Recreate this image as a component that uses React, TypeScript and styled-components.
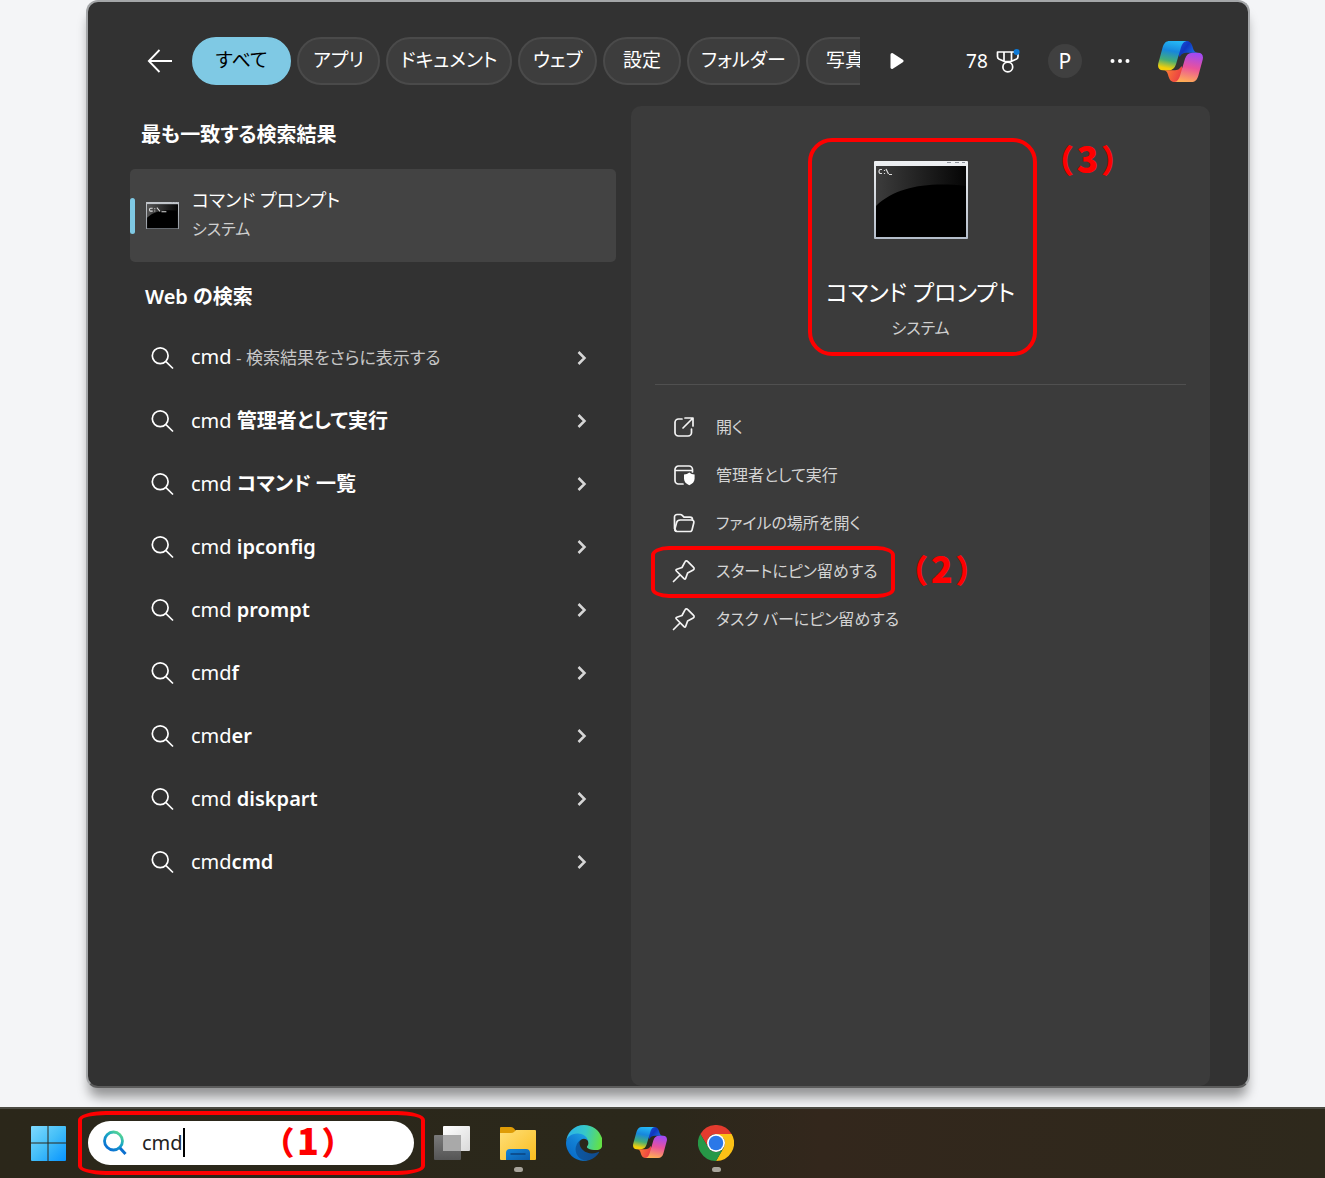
import React, { useId, useState } from "react";
import styled, { createGlobalStyle } from "styled-components";

const GlobalStyle = createGlobalStyle`
  *, *::before, *::after { box-sizing: border-box; }
  body {
    margin: 0;
    background: #f4f5f7;
    font-family: "Noto Sans", "Noto Sans CJK JP", sans-serif;
    font-feature-settings: "palt";
  }
  button, input { font: inherit; font-feature-settings: inherit; color: inherit; }
  button { background: none; border: 0; padding: 0; cursor: pointer; text-align: left; }
  svg { display: block; flex: none; }
  h1, h2, p, ul { margin: 0; padding: 0; }
  ul { list-style: none; }
`;

const Desktop = styled.div`
  min-height: 100vh;
  display: flex;
  flex-direction: column;
`;

const Stage = styled.div`
  flex: 1;
  display: flex;
  padding: 0 75px 19px 86px;
`;

const SearchWindow = styled.main`
  flex: 1;
  min-width: 0;
  display: flex;
  flex-direction: column;
  border: 2px solid #a4a6a8;
  border-bottom-color: #5c5c5c;
  border-radius: 12px;
  background: #323232;
  color: #fff;
  box-shadow: 0 12px 12px -3px rgba(0, 0, 0, 0.4);
`;

const Header = styled.header`
  display: flex;
  align-items: center;
  height: 104px;
  padding: 14px 45px 0 59px;
`;

const BackButton = styled.button`
  width: 45px;
`;

const Pills = styled.nav`
  display: flex;
  gap: 6px;
  width: 668px;
  overflow: hidden;
`;

const Pill = styled.button<{ $active?: boolean; $width: number }>`
  flex: none;
  width: ${(p) => p.$width}px;
  height: 48px;
  padding: 0 0 2px;
  border: 2px solid ${(p) => (p.$active ? "#7fc9e4" : "#4a4a4a")};
  border-radius: 24px;
  background: ${(p) => (p.$active ? "#7fc9e4" : "#3d3d3d")};
  color: ${(p) => (p.$active ? "#000" : "#fff")};
  font-size: 19px;
  line-height: 28px;
  text-align: center;
`;

const HeaderTools = styled.div`
  flex: 1;
  display: flex;
  align-items: center;
  justify-content: space-between;
  padding-left: 30px;
`;

const Points = styled.button`
  display: flex;
  align-items: center;
  gap: 8px;
  margin-left: 34px;
  font-size: 19px;
  line-height: 28px;
`;

const Avatar = styled.button`
  width: 34px;
  height: 34px;
  border-radius: 50%;
  background: #404040;
  font-size: 21px;
  line-height: 32px;
  text-align: center;
`;

const Columns = styled.div`
  flex: 1;
  display: grid;
  grid-template-columns: minmax(0, 486fr) minmax(0, 579fr);
  gap: 15px;
  padding: 0 38px 0 42px;
`;

const Results = styled.section`
  min-width: 0;
`;

const Heading = styled.h2<{ $inset: number }>`
  padding: 14px 0 0 ${(p) => p.$inset}px;
  font-size: 20px;
  font-weight: 600;
  line-height: 30px;
`;

const BestMatch = styled.button`
  display: flex;
  align-items: center;
  width: 100%;
  height: 93px;
  margin: 19px 0 6px;
  border-radius: 5px;
  background: #434343;
  gap: 13px;
`;

const Accent = styled.span`
  width: 5px;
  height: 36px;
  margin-right: -2px;
  border-radius: 3px;
  background: #7fc9e4;
`;

const BestText = styled.span`
  display: flex;
  flex-direction: column;
  padding-bottom: 4px;
`;

const Title = styled.span`
  font-size: 18px;
  line-height: 30px;
`;

const Subtitle = styled.span`
  color: #cfcfcf;
  font-size: 16px;
  line-height: 28px;
`;

const Suggestions = styled.ul`
  padding-top: 14px;
`;

const Suggestion = styled.button`
  display: flex;
  align-items: center;
  width: 100%;
  height: 63px;
  padding: 0 27px 0 21px;
  gap: 17px;
  font-size: 20px;
  line-height: 30px;
`;

const Query = styled.span`
  flex: 1;
  white-space: pre;
  b { font-weight: 600; }
  small { font-size: 17px; color: #c6c6c6; }
`;

const Detail = styled.section`
  min-width: 0;
  padding: 0 24px;
  border-radius: 10px;
  background: #3b3b3b;
`;

const Hero = styled.div`
  display: flex;
  flex-direction: column;
  align-items: center;
  height: 279px;
  padding-top: 32px;
  border-bottom: 1px solid #505050;
`;

const HeroCard = styled.div`
  position: relative;
  display: flex;
  flex-direction: column;
  align-items: center;
  width: 228px;
  height: 218px;
  padding-top: 23px;
`;

const HeroTitle = styled.h1`
  margin-top: 33px;
  font-size: 23px;
  font-weight: 400;
  line-height: 40px;
  white-space: nowrap;
`;

const HeroSub = styled.p`
  margin-top: 2px;
  color: #cfcfcf;
  font-size: 16px;
  line-height: 28px;
`;

const Actions = styled.ul`
  padding-top: 18px;
`;

const ActionItem = styled.li`
  display: flex;
`;

const Action = styled.button`
  position: relative;
  display: flex;
  align-items: center;
  height: 48px;
  padding: 0 17px;
  gap: 20px;
  color: #d4d4d4;
  font-size: 16px;
  line-height: 28px;
`;

/* Red call-outs laid over the controls they explain. */
const Ring = styled.span<{ $radius: string; $inset: string }>`
  position: absolute;
  inset: ${(p) => p.$inset};
  border: 4px solid #fe0000;
  border-radius: ${(p) => p.$radius};
  pointer-events: none;
`;

const StepLabel = styled.span<{ $left: string; $top: string }>`
  position: absolute;
  left: ${(p) => p.$left};
  top: ${(p) => p.$top};
  color: #fe0000;
  font-family: "Noto Sans CJK JP", sans-serif;
  font-size: 32px;
  font-weight: 900;
  line-height: 44px;
  white-space: nowrap;
  pointer-events: none;
  b {
    margin: 0 4px;
    font-size: 36px;
  }
`;

const Step = ({ n, left, top }: { n: number; left: string; top: string }) => (
  <StepLabel $left={left} $top={top}>
    （<b>{n}</b>）
  </StepLabel>
);

const Taskbar = styled.footer`
  display: flex;
  align-items: center;
  height: 71px;
  padding: 0 0 2px 30px;
  border-top: 2px solid #4c4b43;
  background: linear-gradient(90deg, #2b271a, #2b281b 50%, #33271c 62%, #2e291c);
`;

const SearchWrap = styled.div`
  position: relative;
  margin: 0 5px 0 22px;
`;

const SearchBox = styled.label`
  display: flex;
  align-items: center;
  width: 326px;
  height: 44px;
  padding-left: 15px;
  border-radius: 22px;
  background: #fff;
  color: #222;
`;

const SearchInput = styled.input`
  field-sizing: content;
  min-width: 8px;
  max-width: 240px;
  margin-left: 15px;
  padding: 0;
  border: 0;
  outline: 0;
  background: transparent;
  font-size: 20px;
  line-height: 30px;
  caret-color: transparent;
`;

const Caret = styled.span`
  width: 2px;
  height: 29px;
  background: #000;
`;

const TaskButton = styled.button<{ $running?: boolean }>`
  position: relative;
  display: flex;
  align-items: center;
  justify-content: center;
  width: 66px;
  height: 67px;
  &::after {
    content: "";
    display: ${(p) => (p.$running ? "block" : "none")};
    position: absolute;
    bottom: 4px;
    left: 29px;
    width: 9px;
    height: 5px;
    border-radius: 3px;
    background: #a8a49b;
  }
`;

const CopilotIcon = ({ width }: { width: number }) => {
  const id = useId();
  const ref = (n: string) => `url(#${id}${n})`;
  return (
    <svg width={width} viewBox="0 0 135 123" aria-hidden="true">
      <defs>
        <linearGradient id={id + "a"} x1="0.6" y1="0" x2="0.4" y2="1">
          <stop offset="0" stopColor="#25b8f5" />
          <stop offset="0.35" stopColor="#1787dc" />
          <stop offset="0.68" stopColor="#45ad77" />
          <stop offset="0.95" stopColor="#f4cf0a" />
        </linearGradient>
        <linearGradient id={id + "b"} x1="0.6" y1="0" x2="0.4" y2="1">
          <stop offset="0" stopColor="#a04af5" />
          <stop offset="0.5" stopColor="#ea529b" />
          <stop offset="1" stopColor="#ffad55" />
        </linearGradient>
        <linearGradient id={id + "c"} x1="0" y1="0" x2="1" y2="0.6">
          <stop offset="0" stopColor="#1d57df" />
          <stop offset="0.5" stopColor="#0f37bf" />
          <stop offset="1" stopColor="#1c72e6" />
        </linearGradient>
        <linearGradient id={id + "d"} x1="0" y1="0" x2="1" y2="0.3">
          <stop offset="0" stopColor="#ff8a32" />
          <stop offset="1" stopColor="#e93a45" />
        </linearGradient>
      </defs>
      <path fill={ref("c")} d="M68 0H84C95 0 100 6 103 15L106 25C108 31 112 35 120 35H88C76 35 70 38 65 48L56 30Z" />
      <path fill={ref("d")} d="M67 123H51C40 123 35 117 32 108L29 98C27 92 23 88 15 88H47C59 88 65 85 70 75L79 93Z" />
      <path fill={ref("a")} d="M35 0H86C77 1 72 9 69 19L54 70C50 82 43 88 32 88H15C2 88-3 78 2 63L14 19C18 6 24 0 35 0Z" />
      <path fill={ref("b")} d="M100 123H49C58 122 63 114 66 104L81 53C85 41 92 35 103 35H120C133 35 138 45 133 60L121 104C117 117 111 123 100 123Z" />
    </svg>
  );
};

const TerminalIcon = ({ width, small }: { width: number; small?: boolean }) => {
  const id = useId();
  const edge = small ? 3 : 2;
  const top = small ? 7 : 5;
  return (
    <svg width={width} viewBox="0 0 94 78" aria-hidden="true">
      <defs>
        <linearGradient id={id + "g"} x1="0" y1="0" x2="1" y2="0">
          <stop offset="0" stopColor={small ? "#555" : "#3c3c3c"} />
          <stop offset="1" stopColor="#050505" />
        </linearGradient>
        <linearGradient id={id + "f"} x1="0" y1="0" x2="0" y2="1">
          <stop offset="0" stopColor={small ? "#c3c7cc" : "#eef0f2"} />
          <stop offset="1" stopColor={small ? "#9399a1" : "#b4bdca"} />
        </linearGradient>
      </defs>
      <rect width="94" height="78" rx="1" fill={`url(#${id}f)`} />
      <path d="M73 1.5h4m4 0h4m3 0h3" stroke="#8b9099" />
      <rect x={edge} y={top} width={94 - 2 * edge} height={small ? 68 : 71} fill="#000" />
      <path d={`M${edge} ${top}H${94 - edge}V25C55 21 23 25 ${edge} 45Z`} fill={`url(#${id}g)`} />
      {small ? (
        <g fill="none" stroke="#ddd" strokeWidth="3">
          <path d="M19 18h-6q-3 0-3 4t3 4h6M25 18v3m0 3v3M31 16l9 11M44 28h14" />
        </g>
      ) : (
        <path d="M8 8.500H6Q5 9 5 10.500t1 2h2M10.500 9v1m0 2v1M12 8l2.500 5M15 13.500h3" fill="none" stroke="#ddd" strokeWidth="1.200" />
      )}
    </svg>
  );
};

const Magnifier = () => (
  <svg width="23" height="24" viewBox="0 0 23 24" fill="none" stroke="#fff" strokeWidth="1.700" aria-hidden="true">
    <circle cx="9.200" cy="9.800" r="7.900" />
    <path d="M15 15.600L22 22.500" />
  </svg>
);

const Chevron = () => (
  <svg width="15" height="16" viewBox="0 0 15 16" fill="none" stroke="#d6d6d6" strokeWidth="2.500" aria-hidden="true">
    <path d="M4.500 2L10.500 8L4.500 14" />
  </svg>
);

const lineIcon = {
  width: 24,
  height: 24,
  viewBox: "0 0 24 24",
  fill: "none",
  stroke: "#f4f4f4",
  strokeWidth: 1.7,
  strokeLinecap: "round" as const,
  strokeLinejoin: "round" as const,
  "aria-hidden": true,
};

const OpenIcon = () => (
  <svg {...lineIcon}>
    <path d="M10 4H6.500A3.500 3.500 0 0 0 3 7.500v10A3.500 3.500 0 0 0 6.500 21h9.500a3.500 3.500 0 0 0 3.500-3.500V14M13 3h8v8M20.500 3.500L11 13" />
  </svg>
);

const AdminIcon = () => (
  <svg {...lineIcon}>
    <path d="M11 21H6.500A3.500 3.500 0 0 1 3 17.500V6.500A3.500 3.500 0 0 1 6.500 3H17a3.500 3.500 0 0 1 3.500 3.500V9M3 7.500h17.500" />
    <path d="M17.300 9.500c1.500 1.300 3.200 1.900 5.300 2v4.200c0 3-2.200 5.200-5.300 6.500-3.100-1.300-5.300-3.500-5.300-6.500v-4.200c2.100-.1 3.800-.7 5.300-2Z" fill="#fff" stroke="none" />
  </svg>
);

const FolderIcon = () => (
  <svg {...lineIcon}>
    <path d="M4 20L2.500 17.500V6a2.500 2.500 0 0 1 2.500-2.500h3.200c.8 0 1.500.3 2 .8L12 6.200h6A2.500 2.500 0 0 1 20.500 8.700" />
    <path d="M8.300 9h11.200c1.700 0 2.700 1.300 2.300 2.800l-1.600 6.400A2.500 2.500 0 0 1 17.700 20.500H4.800c-1.500 0-2.300-1-1.900-2.500l1.700-6.500C5 9.900 6.300 9 8.300 9Z" />
  </svg>
);

const PinIcon = () => (
  <svg {...lineIcon}>
    <path d="M13 2.800a1.600 1.600 0 0 1 2.600-.4l6 6a1.600 1.600 0 0 1-.4 2.600L15.600 14l-1.900 5.300c-.3.900-1 1-1.700.4L4.400 12c-.7-.7-.5-1.400.4-1.700L10 8.500ZM8 16L1.500 22.500" />
  </svg>
);

const BackIcon = () => (
  <svg width="26" height="24" viewBox="0 0 26 24" fill="none" stroke="#fff" strokeWidth="1.800" aria-hidden="true">
    <path d="M12.500 1L1.800 12L12.500 23M1.800 12H25" />
  </svg>
);

const MedalIcon = () => (
  <svg width="24" height="24" viewBox="0 0 24 24" fill="none" stroke="#fff" strokeWidth="1.700" strokeLinejoin="round" aria-hidden="true">
    <path d="M1.500 3H22v4.500c0 1.200-.4 1.900-1.400 2.400L15 12.500H8.500L2.900 9.900c-1-.5-1.400-1.200-1.400-2.400ZM8 3v9M15.500 3v9" />
    <circle cx="11.800" cy="18" r="4.900" />
    <circle cx="20.600" cy="3" r="3" fill="#0d7ad8" stroke="none" />
  </svg>
);

const WindowsIcon = () => (
  <svg width="36" height="36" viewBox="0 0 36 36" aria-hidden="true">
    <defs>
      <linearGradient id="win" x1="0" y1="0" x2="36" y2="36" gradientUnits="userSpaceOnUse">
        <stop offset="0" stopColor="#83dcff" />
        <stop offset="0.5" stopColor="#45bff8" />
        <stop offset="1" stopColor="#0794ff" />
      </linearGradient>
    </defs>
    <path fill="url(#win)" d="M2 1h15.500v16.500H1V2q0-1 1-1ZM18.500 1H35q1 0 1 1v15.500H18.500ZM1 18.500h16.500V36H2q-1 0-1-1ZM18.500 18.500H36V35q0 1-1 1H18.500Z" />
  </svg>
);

const SearchColorIcon = () => (
  <svg width="24" height="26" viewBox="0 0 24 26" fill="none" aria-hidden="true">
    <defs>
      <linearGradient id="lens" x1="18" y1="3" x2="6" y2="19" gradientUnits="userSpaceOnUse">
        <stop offset="0" stopColor="#5fdc8e" />
        <stop offset="0.45" stopColor="#18a6c4" />
        <stop offset="1" stopColor="#0b72d4" />
      </linearGradient>
    </defs>
    <circle cx="10.500" cy="11" r="9" stroke="url(#lens)" strokeWidth="2.800" />
    <path d="M17 18L22.500 24" stroke="#0b6fcf" strokeWidth="3" />
  </svg>
);

const TaskViewIcon = () => (
  <svg width="36" height="34" viewBox="0 0 36 34" aria-hidden="true">
    <defs>
      <linearGradient id="tvw" x1="0" y1="0" x2="1" y2="1">
        <stop offset="0" stopColor="#fff" />
        <stop offset="1" stopColor="#d9d9d9" />
      </linearGradient>
      <linearGradient id="tvg" x1="0" y1="0" x2="0" y2="1">
        <stop offset="0" stopColor="#7a7a7a" />
        <stop offset="1" stopColor="#555" />
      </linearGradient>
    </defs>
    <rect y="9" width="27" height="25" rx="1" fill="url(#tvg)" />
    <rect x="9" width="27" height="25" rx="1" fill="url(#tvw)" />
    <path d="M9 9h18v16H9Z" fill="#a9a9a9" />
  </svg>
);

const ExplorerIcon = () => (
  <svg width="36" height="34" viewBox="0 0 36 34" aria-hidden="true">
    <defs>
      <linearGradient id="fol" x1="0" y1="0" x2="1" y2="1">
        <stop offset="0" stopColor="#ffdf78" />
        <stop offset="1" stopColor="#fabd1e" />
      </linearGradient>
      <linearGradient id="tray" x1="0" y1="0" x2="1" y2="1">
        <stop offset="0" stopColor="#1487dc" />
        <stop offset="1" stopColor="#0d5ba8" />
      </linearGradient>
    </defs>
    <path d="M0 12V2q0-1 1-1h10q2 0 3 1.500L16 5v7Z" fill="#df9c06" />
    <path d="M0 7h11q2 0 3-1l2-2h19q1 0 1 1v28q0 1-1 1H1q-1 0-1-1Z" fill="url(#fol)" />
    <path d="M6 34V27q0-4 4-4h16q4 0 4 4v7Z" fill="url(#tray)" />
    <path d="M11 28h14" stroke="#0a437f" strokeWidth="1.500" strokeLinecap="round" />
  </svg>
);

const EdgeIcon = () => (
  <svg width="36" height="36" viewBox="0 0 256 256" aria-hidden="true">
    <defs>
      <linearGradient id="e1" x1="60" y1="177" x2="242" y2="177" gradientUnits="userSpaceOnUse">
        <stop offset="0" stopColor="#0c59a4" />
        <stop offset="1" stopColor="#114a8b" />
      </linearGradient>
      <linearGradient id="e2" x1="152" y1="85" x2="45" y2="215" gradientUnits="userSpaceOnUse">
        <stop offset="0" stopColor="#1b9de2" />
        <stop offset="0.5" stopColor="#127fd4" />
        <stop offset="1" stopColor="#0a6fc9" />
      </linearGradient>
      <linearGradient id="e3" x1="15" y1="60" x2="250" y2="110" gradientUnits="userSpaceOnUse">
        <stop offset="0" stopColor="#2bb4e8" />
        <stop offset="0.5" stopColor="#37c8c6" />
        <stop offset="1" stopColor="#63e146" />
      </linearGradient>
    </defs>
    <path fill="url(#e1)" d="M231 190c-3 2-7 4-11 5a102 102 0 0 1-36 7c-47 0-88-33-88-74 0-12 7-22 16-27-43 2-54 46-54 72 0 73 68 81 82 81 8 0 20-2 27-5l1-1a128 128 0 0 0 67-53 4 4 0 0 0-4-5Z" />
    <path fill="url(#e2)" d="M106 241a79 79 0 0 1-23-21 81 81 0 0 1 29-119c3-2 9-4 16-4a33 33 0 0 1 26 13 33 33 0 0 1 7 19c0-1 25-80-81-80C36 49 0 91 0 128c0 17 4 34 11 50a128 128 0 0 0 157 71 76 76 0 0 1-62-8Z" />
    <path fill="url(#e3)" d="M152 149c-1 1-3 3-3 7 0 3 2 7 6 10 21 14 60 12 61 12 15 0 31-4 36-16a90 90 0 0 0 4-69C236 35 188 0 128 0A128 128 0 0 0 0 126c1-36 37-66 80-66 4 0 24 0 42 10 16 8 25 19 30 29 6 11 7 25 7 30 0 6-3 14-7 20Z" />
  </svg>
);

const ChromeIcon = () => (
  <svg width="36" height="36" viewBox="0 0 48 48" aria-hidden="true">
    <path fill="#e33b2e" d="M3.200 12A24 24 0 0 1 44.800 12H24A12 12 0 0 0 13.600 30Z" />
    <path fill="#fbc116" d="M44.800 12A24 24 0 0 1 24 48L34.400 30A12 12 0 0 0 34.400 18L24 12Z" />
    <path fill="#279847" d="M3.200 12A24 24 0 0 0 24 48L34.400 30A12 12 0 0 1 13.600 30Z" />
    <circle cx="24" cy="24" r="12" fill="#fff" />
    <circle cx="24" cy="24" r="9.700" fill="#2b78e8" />
  </svg>
);

const categories = [
  { name: "すべて", width: 99 },
  { name: "アプリ", width: 83 },
  { name: "ドキュメント", width: 126 },
  { name: "ウェブ", width: 79 },
  { name: "設定", width: 78 },
  { name: "フォルダー", width: 113 },
  { name: "写真", width: 78 },
];

const suggestions: { plain: string; bold?: string; note?: string }[] = [
  { plain: "cmd", note: " - 検索結果をさらに表示する" },
  { plain: "cmd ", bold: "管理者として実行" },
  { plain: "cmd ", bold: "コマンド 一覧" },
  { plain: "cmd ", bold: "ipconfig" },
  { plain: "cmd ", bold: "prompt" },
  { plain: "cmd", bold: "f" },
  { plain: "cmd", bold: "er" },
  { plain: "cmd ", bold: "diskpart" },
  { plain: "cmd", bold: "cmd" },
];

const actions = [
  { label: "開く", Icon: OpenIcon },
  { label: "管理者として実行", Icon: AdminIcon },
  { label: "ファイルの場所を開く", Icon: FolderIcon },
  { label: "スタートにピン留めする", Icon: PinIcon, step: 2 },
  { label: "タスク バーにピン留めする", Icon: PinIcon },
];

export default function App() {
  const [category, setCategory] = useState(categories[0].name);
  const [query, setQuery] = useState("cmd");

  return (
    <Desktop>
      <GlobalStyle />
      <Stage>
        <SearchWindow>
          <Header>
            <BackButton aria-label="戻る">
              <BackIcon />
            </BackButton>
            <Pills>
              {categories.map(({ name, width }) => (
                <Pill key={name} $width={width} $active={name === category} onClick={() => setCategory(name)}>
                  {name}
                </Pill>
              ))}
            </Pills>
            <HeaderTools>
              <button aria-label="次へ">
                <svg width="14" height="18" viewBox="0 0 14 18" aria-hidden="true">
                  <path d="M2 2.500L12 9L2 15.500Z" fill="#fff" stroke="#fff" strokeWidth="3" strokeLinejoin="round" />
                </svg>
              </button>
              <Points>
                78
                <MedalIcon />
              </Points>
              <Avatar>P</Avatar>
              <button aria-label="オプション">
                <svg width="20" height="6" viewBox="0 0 20 6" fill="#fff" aria-hidden="true">
                  <circle cx="2.500" cy="3" r="2" />
                  <circle cx="10" cy="3" r="2" />
                  <circle cx="17.500" cy="3" r="2" />
                </svg>
              </button>
              <button aria-label="Copilot">
                <CopilotIcon width={45} />
              </button>
            </HeaderTools>
          </Header>
          <Columns>
            <Results>
              <Heading $inset={11}>最も一致する検索結果</Heading>
              <BestMatch>
                <Accent />
                <TerminalIcon width={33} small />
                <BestText>
                  <Title>コマンド プロンプト</Title>
                  <Subtitle>システム</Subtitle>
                </BestText>
              </BestMatch>
              <Heading $inset={15}>Web の検索</Heading>
              <Suggestions>
                {suggestions.map((s, i) => (
                  <li key={i}>
                    <Suggestion>
                      <Magnifier />
                      <Query>
                        {s.plain}
                        {s.bold && <b>{s.bold}</b>}
                        {s.note && <small>{s.note}</small>}
                      </Query>
                      <Chevron />
                    </Suggestion>
                  </li>
                ))}
              </Suggestions>
            </Results>
            <Detail>
              <Hero>
                <HeroCard>
                  <TerminalIcon width={94} />
                  <HeroTitle>コマンド プロンプト</HeroTitle>
                  <HeroSub>システム</HeroSub>
                  <Ring $radius="24px" $inset="0 -2px 0 1px" />
                  <Step n={3} left="250px" top="-3px" />
                </HeroCard>
              </Hero>
              <Actions>
                {actions.map(({ label, Icon, step }) => (
                  <ActionItem key={label}>
                    <Action>
                      <Icon />
                      {label}
                      {step && (
                        <>
                          <Ring $radius="18px / 9px" $inset="-1px 0 -3px -4px" />
                          <Step n={step} left="calc(100% + 16px)" top="-2px" />
                        </>
                      )}
                    </Action>
                  </ActionItem>
                ))}
              </Actions>
            </Detail>
          </Columns>
        </SearchWindow>
      </Stage>
      <Taskbar>
        <button aria-label="スタート">
          <WindowsIcon />
        </button>
        <SearchWrap>
          <SearchBox>
            <SearchColorIcon />
            <SearchInput aria-label="検索" value={query} onChange={(e) => setQuery(e.target.value)} />
            <Caret />
          </SearchBox>
          <Ring $radius="28px / 9px" $inset="-10px -11px -10px -10px" />
          <Step n={1} left="189px" top="-4px" />
        </SearchWrap>
        <TaskButton aria-label="タスク ビュー"><TaskViewIcon /></TaskButton>
        <TaskButton aria-label="エクスプローラー" $running><ExplorerIcon /></TaskButton>
        <TaskButton aria-label="Microsoft Edge"><EdgeIcon /></TaskButton>
        <TaskButton aria-label="Copilot"><CopilotIcon width={34} /></TaskButton>
        <TaskButton aria-label="Google Chrome" $running><ChromeIcon /></TaskButton>
      </Taskbar>
    </Desktop>
  );
}
